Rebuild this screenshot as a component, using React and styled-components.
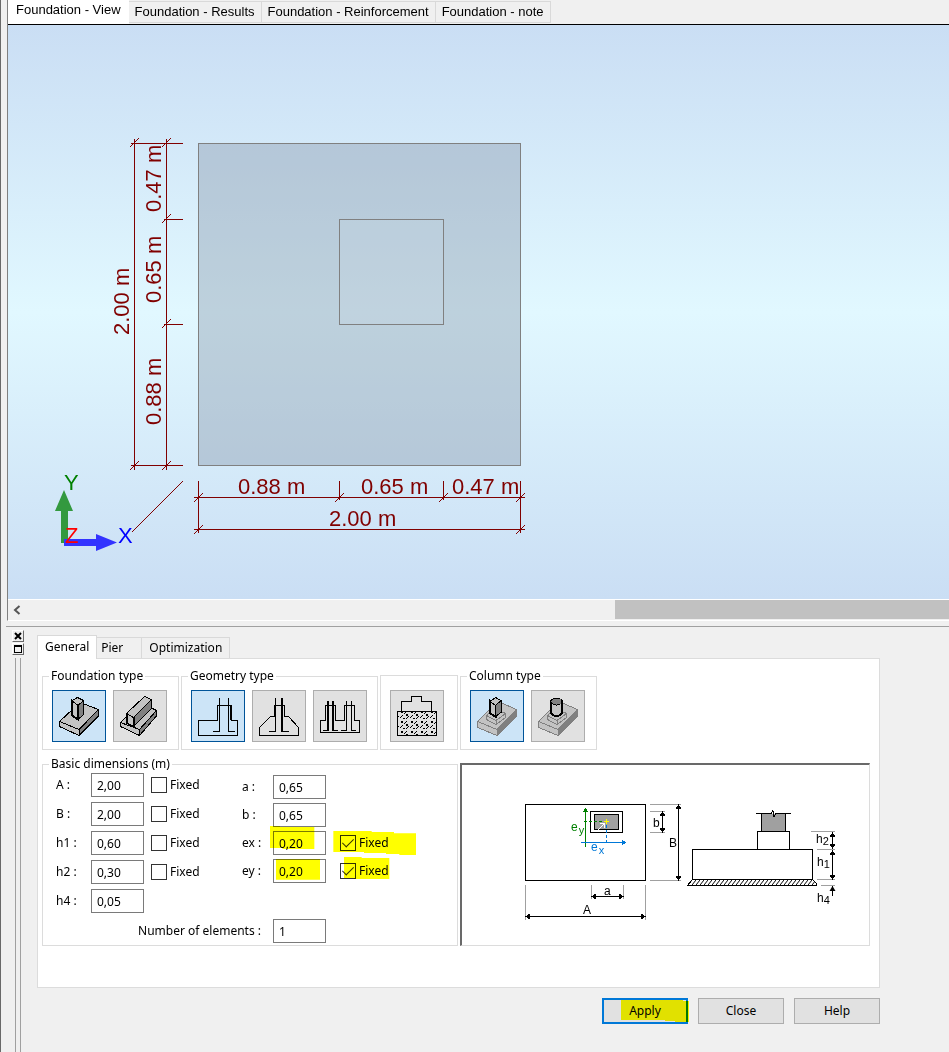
import React, { useState } from 'react'
import styled, { createGlobalStyle } from 'styled-components'

const viewTabs = [
  'Foundation - View',
  'Foundation - Results',
  'Foundation - Reinforcement',
  'Foundation - note',
]

const leftDims = [
  { id: 'A', value: '2,00', fixed: true },
  { id: 'B', value: '2,00', fixed: true },
  { id: 'h1', value: '0,60', fixed: true },
  { id: 'h2', value: '0,30', fixed: true },
  { id: 'h4', value: '0,05' },
]

const rightDims = [
  { id: 'a', value: '0,65' },
  { id: 'b', value: '0,65' },
  { id: 'ex', value: '0,20', fixed: true, checked: true },
  { id: 'ey', value: '0,20', fixed: true, checked: true },
]

/* model view */

const Slash = ({ x, y }) => (
  <path d={`M${x - 4} ${y + 4}L${x + 5} ${y - 5}`} strokeWidth='1' />
)

const Model = () => {
  return (
    <ModelSvg viewBox='8 25 941 574' width='941' height='574'>
      <g stroke='#808080' shapeRendering='crispEdges'>
        <rect x='198.5' y='143.5' width='322' height='322' fill='rgba(114,128,150,0.32)' />
        <rect x='339.5' y='219.5' width='104' height='105' fill='rgba(225,245,250,0.08)' />
      </g>
      <g stroke='#800000' fill='none' shapeRendering='crispEdges'>
        <path d='M134.5 139V470M166.5 139V470M131 143.5H183M164 219.5H183M164 324.5H183M131 465.5H183' />
        <path d='M194 497.5H525M194 529.5H525M198.5 481V533M339.5 481V500M443.5 481V500M520.5 481V533' />
      </g>
      <g stroke='#800000' fill='none'>
        <path d='M132 532L183 481' />
        <Slash x={134} y={143} />
        <Slash x={166} y={143} />
        <Slash x={166} y={219} />
        <Slash x={166} y={324} />
        <Slash x={134} y={466} />
        <Slash x={166} y={466} />
        <Slash x={198} y={498} />
        <Slash x={339} y={498} />
        <Slash x={443} y={498} />
        <Slash x={520} y={498} />
        <Slash x={198} y={530} />
        <Slash x={520} y={530} />
      </g>
      <g fill='#800000'>
        <text x='238' y='494'>0.88 m</text>
        <text x='361' y='494'>0.65 m</text>
        <text x='452' y='494'>0.47 m</text>
        <text x='329' y='526'>2.00 m</text>
        <text transform='translate(161 212) rotate(-90)'>0.47 m</text>
        <text transform='translate(161 303) rotate(-90)'>0.65 m</text>
        <text transform='translate(161 425) rotate(-90)'>0.88 m</text>
        <text transform='translate(129 335) rotate(-90)'>2.00 m</text>
      </g>
      {/* axes */}
      <path d='M61 543V511H55L64 490L73 511H68V543z' fill='#33993f' />
      <path d='M64 539H96V534L117 542.5L96 551V546H64z' fill='#3333ff' />
      <text x='64' y='490' fill='#008000'>Y</text>
      <text x='65' y='543' fill='#ff0000'>Z</text>
      <text x='118' y='543' fill='#0000ff'>X</text>
    </ModelSvg>
  )
}

/* button drawings */

const Icon = ({ children }) => (
  <svg
    viewBox='0 0 54 52'
    width='54'
    height='52'
    fill='none'
    stroke='#000'
    shapeRendering='crispEdges'
    aria-hidden='true'
  >
    {children}
  </svg>
)

const PadIcon = () => (
  <Icon>
    <path d='M7.5 31.5L28 12.5L46.5 19.5L27 39.5z' fill='#c3c3c3' />
    <path d='M7.5 31.5V36.5L27 45.5V39.5z' fill='#c3c3c3' />
    <path d='M27 39.5V45.5L46.5 26V19.5z' fill='#808080' />
    <path d='M20 10.5V25.5L26 29.5V14.5z' fill='#c3c3c3' strokeWidth='2' />
    <path d='M26 14.5V29.5L31.5 24.5V10.5z' fill='#808080' />
    <path d='M20 10.5L25.5 7.5L31.5 10.5L26 15.5z' fill='#c3c3c3' />
  </Icon>
)

const StripIcon = () => (
  <Icon>
    <path d='M7.5 32.5L27 12.5L43.5 20.5L26.5 39.5z' fill='#c3c3c3' />
    <path d='M7.5 32.5V36.5L26.5 45.5V39.5z' fill='#c3c3c3' />
    <path d='M26.5 39.5V45.5L43.5 26V20.5z' fill='#808080' />
    <path d='M20.5 27.5V36.5L38.5 18.5V9.5z' fill='#808080' />
    <path d='M13.5 23.5V33L20.5 36.5V27.5z' fill='#c3c3c3' />
    <path d='M13.5 23.5L31.5 6.5L38.5 9.5L20.5 27.5z' fill='#c3c3c3' />
    <path d='M13.5 24V33M20.5 27V37' strokeWidth='2' />
  </Icon>
)

const BlockIcon = () => (
  <Icon>
    <path d='M7.5 30.5H26.5V15.5H40.5V30.5H46.5V45.5H7.5z' />
    <path d='M28.5 8V41.5H22M37.5 8V41.5H44' />
    <path d='M40 15V30' strokeWidth='2' />
  </Icon>
)

const SlopedIcon = () => (
  <Icon>
    <path d='M7.5 45.5V37.5L18.5 26.5H22.5V15.5H32.5V26.5H36.5L46.5 37.5V45.5z' />
    <path d='M23.5 8V41.5H17M30.5 41.5H37' />
    <path d='M30 8V42' strokeWidth='2' />
  </Icon>
)

const DoubleIcon = () => (
  <Icon>
    <path d='M7.5 42.5V30.5H12.5V15.5H22.5V30.5H31.5V15.5H41.5V30.5H46.5V42.5z' />
    <path d='M10 40.5H15M20 40.5H25M33.5 11V40.5H28M38.5 11V40.5H43' />
    <path d='M15 11V41M20 11V41' strokeWidth='2' />
  </Icon>
)

const SoilIcon = () => (
  <Icon>
    <defs>
      <pattern id='soil' width='10' height='10' patternUnits='userSpaceOnUse'>
        <path d='M1 1h2v2h-2zM6 4h2v2h-2zM3 8h2v1h-2z' fill='#000' stroke='none' />
        <path d='M4 4L7 1M0 8L3 5M6 9L9 6' stroke='#000' />
      </pattern>
    </defs>
    <path d='M11.5 21V11.5H21.5V6.5H31.5V11.5H41.5V21' />
    <rect x='7.5' y='21.5' width='39' height='24' fill='url(#soil)' />
  </Icon>
)

const ColumnBase = () => (
  <>
    <path d='M7.5 31.5L28 11.5L46.5 19.5L27 39.5z' fill='#c3c3c3' stroke='#808080' />
    <path d='M7.5 31.5V37.5L27 45.5V39.5z' fill='#c3c3c3' stroke='#808080' />
    <path d='M27 39.5V45.5L46.5 26.5V19.5z' fill='#808080' stroke='#808080' />
    <path d='M16.5 25.5L25 18.5L35.5 23.5V27.5L26 34.5L16.5 29.5z' fill='#c3c3c3' stroke='#808080' />
    <path d='M16.5 25.5L26 30.5L35.5 23.5M26 30V34' stroke='#808080' />
  </>
)

const SquareColumnIcon = () => (
  <Icon>
    <ColumnBase />
    <path d='M20 10.5V23.5L25.5 26.5V14.5z' fill='#c3c3c3' strokeWidth='2' />
    <path d='M25.5 14.5V26.5L31 22.5V10.5z' fill='#808080' />
    <path d='M20 11.5L25.5 7.5L31 10.5L25.5 15.5z' fill='#c3c3c3' />
  </Icon>
)

const RoundColumnIcon = () => (
  <Icon>
    <ColumnBase />
    <path d='M20 11V23.5L23 25.5H28L31 23.5V11z' fill='#c3c3c3' strokeWidth='2' />
    <ellipse cx='25.5' cy='11.5' rx='5.5' ry='3.5' fill='#808080' />
  </Icon>
)

/* dimension sketch in the preview box */

const ArrowH = ({ x1, x2, y }) => (
  <g shapeRendering='crispEdges'>
    <path d={`M${x1} ${y}H${x2}`} stroke='#000' />
    <path d={`M${x1} ${y}l5 -3v6zM${x2} ${y}l-5 -3v6z`} fill='#000' />
  </g>
)

const ArrowV = ({ x, y1, y2 }) => (
  <g shapeRendering='crispEdges'>
    <path d={`M${x} ${y1}V${y2}`} stroke='#000' />
    <path d={`M${x} ${y1}l-3 5h6zM${x} ${y2}l-3 -5h6z`} fill='#000' />
  </g>
)

const Sketch = () => {
  return (
    <SketchSvg viewBox='486 790 360 130' width='360' height='130'>
      <defs>
        <pattern id='bed' width='4' height='6' patternUnits='userSpaceOnUse' y='880'>
          <path d='M0 5L4 0' stroke='#000' />
        </pattern>
      </defs>
      <g fill='none' stroke='#a0a0a0' shapeRendering='crispEdges'>
        <path d='M650 804.5H681M650 880.5H681M650 811.5H665M650 832.5H665' />
        <path d='M525.5 885V920M645.5 885V920M591.5 885V899M623.5 885V899' />
        <path d='M811 831.5H835M817 849.5H835M817 879.5H835M821 885.5H835' />
      </g>
      {/* plan */}
      <g fill='none' stroke='#000' shapeRendering='crispEdges'>
        <rect x='525.5' y='804.5' width='120' height='76' />
        <rect x='590.5' y='811.5' width='32' height='21' />
        <rect x='594.5' y='814.5' width='24' height='15' fill='#a0a0a0' />
      </g>
      <g fill='none' shapeRendering='crispEdges'>
        <path d='M585.5 847V810' stroke='#008000' />
        <path d='M585.5 808l-3 4h6z' fill='#008000' />
        <path d='M584 821.5H604' stroke='#008000' strokeDasharray='3 2' />
        <path d='M581 842.5H623' stroke='#0078d7' />
        <path d='M626 842.5l-4 -3v6z' fill='#0078d7' />
        <path d='M606.5 825V842' stroke='#0078d7' strokeDasharray='3 2' />
        <path d='M596 832L604 824M600 823.5H604.5V828' stroke='#fff' />
        <path d='M604 821.5H609M606.5 819V824' stroke='#ffff00' />
      </g>
      <ArrowV x={662.5} y1={811} y2={833} />
      <ArrowV x={678.5} y1={804} y2={881} />
      <ArrowH x1={591} x2={624} y={896.5} />
      <ArrowH x1={525} x2={646} y={916.5} />
      <text x='653' y='827'>b</text>
      <text x='669' y='847'>B</text>
      <text x='604' y='895'>a</text>
      <text x='583' y='914'>A</text>
      <text x='571' y='831' fill='#008000'>e<tspan dx='1' dy='3' className='sub'>y</tspan></text>
      <text x='591' y='851' fill='#0078d7'>e<tspan dx='1' dy='3' className='sub'>x</tspan></text>
      {/* elevation */}
      <g fill='none' stroke='#000' shapeRendering='crispEdges'>
        <rect x='761.5' y='813.5' width='24' height='18' fill='#a0a0a0' stroke='none' />
        <path d='M761.5 813V831M785.5 813V831' />
        <path d='M756 813.5H771L773 810.5L774 816.5L776 813.5H791' />
        <rect x='757.5' y='831.5' width='32' height='18' />
        <rect x='692.5' y='849.5' width='120' height='30' />
        <path d='M692.5 879.5L687.5 885.5H816.5V883.5L812.5 879.5z' fill='url(#bed)' />
      </g>
      <ArrowV x={832.5} y1={832} y2={849} />
      <ArrowV x={832.5} y1={850} y2={880} />
      <path d='M832.5 886V896' stroke='#000' shapeRendering='crispEdges' />
      <path d='M832.5 886l-3 5h6z' />
      <text x='816' y='843'>h<tspan dy='2' className='sub'>2</tspan></text>
      <text x='817' y='866'>h<tspan dy='2' className='sub'>1</tspan></text>
      <text x='817' y='902'>h<tspan dy='2' className='sub'>4</tspan></text>
    </SketchSvg>
  )
}

const groups = [
  { title: 'Foundation type', icons: [PadIcon, StripIcon] },
  { title: 'Geometry type', icons: [BlockIcon, SlopedIcon, DoubleIcon] },
  { icons: [SoilIcon], plain: true },
  { title: 'Column type', icons: [SquareColumnIcon, RoundColumnIcon] },
]

const IconGroup = ({ title, icons, plain }) => {
  const [active, setActive] = useState(plain ? -1 : 0)
  return (
    <Group $untitled={!title}>
      {title && <legend>{title}</legend>}
      <IconRow $untitled={!title}>
        {icons.map((Drawing, index) => {
          return (
            <IconButton
              key={index}
              type='button'
              aria-label={`${title || 'Soil'} ${index + 1}`}
              $active={active === index}
              onClick={() => !plain && setActive(index)}
            >
              <Drawing />
            </IconButton>
          )
        })}
      </IconRow>
    </Group>
  )
}

const DimRow = ({ id, value, fixed, checked, wide }) => {
  return (
    <Row $wide={wide}>
      <label htmlFor={`dim-${id}`}>{id} :</label>
      <Field id={`dim-${id}`} type='text' defaultValue={value} />
      {fixed && (
        <CheckLabel>
          <Check type='checkbox' defaultChecked={checked} />
          Fixed
        </CheckLabel>
      )}
    </Row>
  )
}

const App = () => {
  const [tab, setTab] = useState(0)

  return (
    <>
      <GlobalStyle />
      <Window>
        <ViewPane>
          <ViewTabs>
            {viewTabs.map((name, index) => (
              <ViewTab
                key={name}
                type='button'
                $active={tab === index}
                onClick={() => setTab(index)}
              >
                {name}
              </ViewTab>
            ))}
          </ViewTabs>
          <Canvas>
            <Model />
          </Canvas>
          <ScrollBar>
            <ScrollArrow type='button' aria-label='Scroll left'>
              <svg width='8' height='10' viewBox='0 0 8 10' fill='none' stroke='#555' strokeWidth='2'>
                <path d='M6.5 1L2 5L6.5 9' />
              </svg>
            </ScrollArrow>
            <ScrollThumb />
          </ScrollBar>
        </ViewPane>
        <Dock>
          <Grip>
            <GripButton type='button' aria-label='Close panel'>
              <svg width='8' height='8' viewBox='0 0 8 8' stroke='#000' strokeWidth='2'>
                <path d='M1 1L7 7M7 1L1 7' />
              </svg>
            </GripButton>
            <GripButton type='button' aria-label='Maximise panel'>
              <svg width='8' height='8' viewBox='0 0 8 8' fill='none' stroke='#000' shapeRendering='crispEdges'>
                <path d='M0.5 0.5H7.5V7.5H0.5zM0 1.5H8' />
              </svg>
            </GripButton>
            <GripLines />
          </Grip>
          <Content>
            <PanelTabs>
              <PanelTab type='button' $active>General</PanelTab>
              <PanelTab type='button' $roomy>Pier</PanelTab>
              <PanelTab type='button'>Optimization</PanelTab>
            </PanelTabs>
            <Panel>
              <GroupGrid>
                {groups.map((group, index) => (
                  <IconGroup key={index} {...group} />
                ))}
              </GroupGrid>
              <LowerGrid>
                <Group>
                  <legend>Basic dimensions (m)</legend>
                  <DimColumns>
                    <DimColumn>
                      {leftDims.map((dim) => (
                        <DimRow key={dim.id} {...dim} />
                      ))}
                    </DimColumn>
                    <DimColumn $second>
                      {rightDims.map((dim) => (
                        <DimRow key={dim.id} {...dim} wide />
                      ))}
                      <Marker viewBox='36 45 540 360' width='180' height='120'>
                        <path d='M120 204H150V207H253V273H157V270H120z' />
                        <path d='M138 303H270V365H138z' />
                        <path d='M310 219H425V222H492V226H558V291H508V288H468V285H402V282H310z' />
                        <path d='M342 297H395V300H478V363H372V360H342z' />
                      </Marker>
                    </DimColumn>
                  </DimColumns>
                  <CountRow>
                    <label htmlFor='count'>Number of elements :</label>
                    <Field id='count' type='text' defaultValue='1' />
                  </CountRow>
                </Group>
                <Preview>
                  <Sketch />
                </Preview>
              </LowerGrid>
            </Panel>
            <Footer>
              <DialogButton type='button' $primary>
                Apply
                <Marker viewBox='0 0 86 26' width='86' height='26'>
                  <path d='M19 2H81V3H87V24H73V23H63V22H19z' />
                </Marker>
              </DialogButton>
              <DialogButton type='button'>Close</DialogButton>
              <DialogButton type='button'>Help</DialogButton>
            </Footer>
          </Content>
        </Dock>
      </Window>
    </>
  )
}

const GlobalStyle = createGlobalStyle`
  * {
    box-sizing: border-box;
  }
  body {
    margin: 0;
    background: #f0f0f0;
    color: #000;
    font-family: 'Noto Sans', sans-serif;
    font-size: 12px;
    line-height: 16px;
  }
  button,
  input {
    font: inherit;
    color: inherit;
    margin: 0;
  }
`

const Window = styled.div`
  display: flex;
  flex-direction: column;
  min-height: 100vh;
  border-left: 1px solid #696969;
`

const ViewPane = styled.section`
  margin-left: 6px;
  border-left: 1px solid #808080;
  border-bottom: 1px solid #fff;
`

const ViewTabs = styled.nav`
  display: flex;
  align-items: flex-start;
  height: 25px;
  border-bottom: 1px solid #000;
  font-family: 'Liberation Sans', sans-serif;
  font-size: 13px;
`

const ViewTab = styled.button`
  height: ${(props) => (props.$active ? '24px' : '22px')};
  margin-top: ${(props) => (props.$active ? '0' : '1px')};
  padding: ${(props) => (props.$active ? '0 7px 4px' : '0 6px')};
  border: 1px solid ${(props) => (props.$active ? '#fff' : '#d9d9d9')};
  border-left-width: ${(props) => (props.$active ? '1px' : '0')};
  background: ${(props) => (props.$active ? '#fff' : '#f0f0f0')};
  white-space: nowrap;
`

const Canvas = styled.div`
  overflow: hidden;
  background: linear-gradient(#cadef4, #e1f8ff 50%, #cadef4);
`

const ModelSvg = styled.svg`
  display: block;
  font-family: 'Liberation Sans', sans-serif;
  font-size: 22px;
`

const ScrollBar = styled.div`
  display: grid;
  grid-template-columns: 607fr 334fr;
  height: 21px;
  padding-bottom: 1px;
  border-top: 1px solid #fff;
`

const ScrollArrow = styled.button`
  display: flex;
  align-items: center;
  width: 20px;
  padding: 0 5px;
  border: 0;
  background: transparent;
`

const ScrollThumb = styled.div`
  background: #c1c1c1;
`

const Dock = styled.section`
  display: flex;
  flex: 1;
  margin: 5px 0 0 5px;
  border-top: 1px solid #a0a0a0;
`

const Grip = styled.div`
  display: flex;
  flex-direction: column;
  align-items: center;
  gap: 1px;
  width: 31px;
  padding: 3px 13px 0 6px;
  flex-shrink: 0;
`

const GripButton = styled.button`
  display: flex;
  align-items: center;
  justify-content: center;
  width: 12px;
  height: 12px;
  padding: 0;
  border: 1px solid #fff;
  border-right-color: #696969;
  border-bottom-color: #696969;
  background: #f0f0f0;
`

const GripLines = styled.div`
  flex: 1;
  width: 6px;
  margin-top: 2px;
  border: solid #a0a0a0;
  border-width: 0 1px;
`

const Content = styled.div`
  flex: 1;
  max-width: 843px;
  padding-top: 8px;
`

const PanelTabs = styled.nav`
  display: flex;
  align-items: flex-end;
  height: 23px;
`

const PanelTab = styled.button`
  height: ${(props) => (props.$active ? '24px' : '21px')};
  padding: ${(props) => (props.$roomy ? '0 18px 0 4px' : '0 7px')};
  padding-bottom: ${(props) => (props.$active ? '2px' : '0')};
  margin-bottom: ${(props) => (props.$active ? '-1px' : '0')};
  border: 1px solid #d9d9d9;
  border-bottom: 0;
  border-left-width: ${(props) => (props.$active ? '1px' : '0')};
  background: ${(props) => (props.$active ? '#fff' : '#f0f0f0')};
  position: relative;
`

const Panel = styled.div`
  padding: 9px 9px 41px 4px;
  border: 1px solid #dcdcdc;
  background: #fff;
`

const GroupGrid = styled.div`
  display: grid;
  grid-template-columns: 137px 197px 78px 137px;
  gap: 2px;
`

const Group = styled.fieldset`
  min-width: 0;
  margin: ${(props) => (props.$untitled ? '7px 0 0' : '0')};
  padding: 0;
  border: 1px solid #dcdcdc;

  legend {
    margin-left: 6px;
    padding: 0 2px;
  }
`

const IconRow = styled.div`
  display: flex;
  gap: 7px;
  padding: ${(props) => (props.$untitled ? '14px 9px 7px' : '6px 9px 7px')};
`

const IconButton = styled.button`
  width: 54px;
  height: 52px;
  padding: 0;
  border: 1px solid ${(props) => (props.$active ? '#005499' : '#adadad')};
  background: ${(props) => (props.$active ? '#cce4f7' : '#e1e1e1')};

  svg {
    display: block;
    margin: -1px;
  }
`

const LowerGrid = styled.div`
  display: grid;
  grid-template-columns: 416px 1fr;
  gap: 2px;
  margin-top: 6px;
`

const DimColumns = styled.div`
  display: grid;
  grid-template-columns: 186px 1fr;
  padding: 1px 13px 0;
`

const DimColumn = styled.div`
  display: flex;
  flex-direction: column;
  gap: ${(props) => (props.$second ? '4px' : '5px')};
  padding-top: ${(props) => (props.$second ? '2px' : '0')};
  position: relative;
`

const Row = styled.div`
  display: grid;
  grid-template-columns: ${(props) => (props.$wide ? '31px 53px 1fr' : '35px 53px 1fr')};
  align-items: center;

  > label:last-child {
    margin-left: ${(props) => (props.$wide ? '14px' : '7px')};
  }
`

const Field = styled.input`
  width: 53px;
  height: 24px;
  padding: 0 5px;
  border: 1px solid #7a7a7a;
  border-radius: 0;
  background: #fff;
`

const CheckLabel = styled.label`
  display: flex;
  align-items: center;
  gap: 3px;
`

const Check = styled.input`
  appearance: none;
  display: flex;
  justify-content: center;
  width: 16px;
  height: 16px;
  border: 1px solid #333;
  background: #fff;

  &:checked::after {
    content: '';
    width: 5px;
    height: 10px;
    border: solid #333;
    border-width: 0 1px 1px 0;
    transform: rotate(45deg);
  }
`

const Marker = styled.svg`
  position: absolute;
  top: 0;
  left: 0;
  overflow: visible;
  fill: #ffff00;
  mix-blend-mode: multiply;
  pointer-events: none;
`

const CountRow = styled.div`
  display: grid;
  grid-template-columns: 206px 53px;
  column-gap: 12px;
  align-items: center;
  padding: 6px 12px 2px;
  text-align: right;
`

const Preview = styled.div`
  display: flex;
  align-items: center;
  justify-content: center;
  margin-top: 7px;
  border: 1px solid #dcdcdc;
  border-top: 2px solid #696969;
  border-left: 2px solid #696969;
  overflow: hidden;
`

const SketchSvg = styled.svg`
  overflow: visible;
  font-family: 'Liberation Sans', sans-serif;
  font-size: 12px;

  .sub {
    font-size: 11px;
  }
`

const Footer = styled.div`
  display: flex;
  justify-content: flex-end;
  gap: 10px;
  padding: 10px 0 28px;
`

const DialogButton = styled.button`
  position: relative;
  width: 86px;
  height: 26px;
  padding: 0;
  border: ${(props) => (props.$primary ? '2px solid #0078d7' : '1px solid #adadad')};
  background: #e1e1e1;

  ${Marker} {
    top: -2px;
    left: -2px;
  }
`

export default App
